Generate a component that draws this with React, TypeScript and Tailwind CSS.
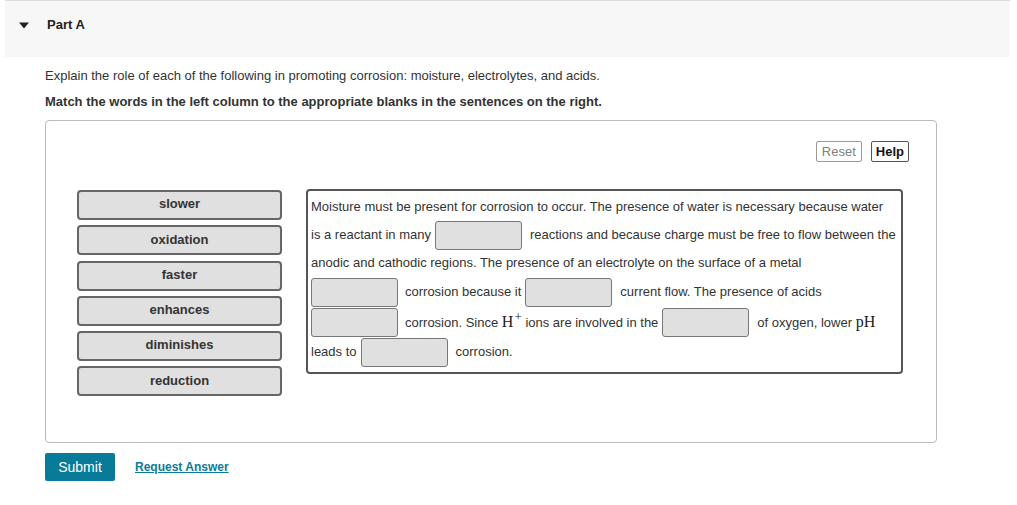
import React from 'react';

const words = ['slower', 'oxidation', 'faster', 'enhances', 'diminishes', 'reduction'];

function Blank() {
  return <span className="inline-block w-[87px] h-[29px] bg-[#e0e0e0] border border-[#777] rounded-[3px] shrink-0" />;
}

function MathText({ children }: { children: React.ReactNode }) {
  return <span className="font-['Liberation_Serif',serif] text-[16px] text-[#222]">{children}</span>;
}

export default function App() {
  return (
    <div className="w-[1017px] h-[505px] bg-white font-['Liberation_Sans',Arial,sans-serif] text-[#333]">
      {/* Header */}
      <div className="ml-[5px] w-[1005px] h-[57px] bg-[#f7f7f7] border-t border-[#dcdcdc] flex items-center">
        <svg width="10" height="7" viewBox="0 0 10 7" className="ml-[14px] mt-[-8px]">
          <polygon points="0,0.5 10,0.5 5,6.5" fill="#222" />
        </svg>
        <span className="ml-[18px] text-[13px] font-bold text-[#222] mt-[-9px]">Part A</span>
      </div>

      <div className="pl-[45px] pt-[10px]">
        <p className="text-[13px] leading-[17px]">
          Explain the role of each of the following in promoting corrosion: moisture, electrolytes, and acids.
        </p>
        <p className="mt-[9px] text-[13px] leading-[17px] font-bold">
          Match the words in the left column to the appropriate blanks in the sentences on the right.
        </p>

        {/* Task box */}
        <div className="mt-[10px] w-[892px] h-[323px] border border-[#bbb] rounded-[4px]">
          <div className="flex justify-end gap-[9px] pt-[20px] pr-[27px]">
            <button className="h-[21px] px-[5px] border border-[#999] rounded-[2px] text-[13px] text-[#808080] leading-none bg-white">
              Reset
            </button>
            <button className="h-[21px] px-[4px] border border-[#555] rounded-[2px] text-[13px] font-bold text-[#111] leading-none bg-white">
              Help
            </button>
          </div>

          <div className="flex mt-[28px] pl-[31px]">
            {/* Word tiles */}
            <div className="flex flex-col gap-[5.25px] w-[205px]">
              {words.map((w) => (
                <div
                  key={w}
                  className="h-[30px] bg-[#e0e0e0] border-2 border-[#666] rounded-[4px] flex items-center justify-center text-[13px] font-bold text-[#333] pb-[2px]"
                >
                  {w}
                </div>
              ))}
            </div>

            {/* Sentences */}
            <div className="ml-[24px] mt-[-1px] w-[597px] h-[185px] border-2 border-[#555] rounded-[4px] pl-[3px] pt-[2px] text-[13px] text-[#333]">
              <div className="h-[28px] flex items-center">
                Moisture must be present for corrosion to occur. The presence of water is necessary because water
              </div>
              <div className="h-[28px] flex items-center">
                <span>is a reactant in many</span>
                <span className="ml-[4px] mr-[8px] flex"><Blank /></span>
                <span>reactions and because charge must be free to flow between the</span>
              </div>
              <div className="h-[28px] flex items-center">
                anodic and cathodic regions. The presence of an electrolyte on the surface of a metal
              </div>
              <div className="h-[30px] flex items-center">
                <Blank />
                <span className="ml-[7px]">corrosion because it</span>
                <span className="ml-[4px] mr-[8px] flex"><Blank /></span>
                <span>current flow. The presence of acids</span>
              </div>
              <div className="h-[30px] flex items-center">
                <Blank />
                <span className="ml-[7px]">
                  corrosion. Since{' '}
                  <MathText>
                    H<sup className="text-[13px] ml-[1px]">+</sup>
                  </MathText>{' '}
                  ions are involved in the
                </span>
                <span className="ml-[4px] mr-[8px] flex"><Blank /></span>
                <span>
                  of oxygen, lower <MathText>pH</MathText>
                </span>
              </div>
              <div className="h-[30px] flex items-center">
                <span>leads to</span>
                <span className="ml-[4px] mr-[8px] flex"><Blank /></span>
                <span>corrosion.</span>
              </div>
            </div>
          </div>
        </div>

        {/* Actions */}
        <div className="flex items-center mt-[10px]">
          <button className="w-[70px] h-[28px] bg-[#087b99] rounded-[2px] text-white text-[14px]">Submit</button>
          <a href="#" className="ml-[20px] text-[12px] font-bold text-[#0b7a9c] underline">
            Request Answer
          </a>
        </div>
      </div>
    </div>
  );
}
